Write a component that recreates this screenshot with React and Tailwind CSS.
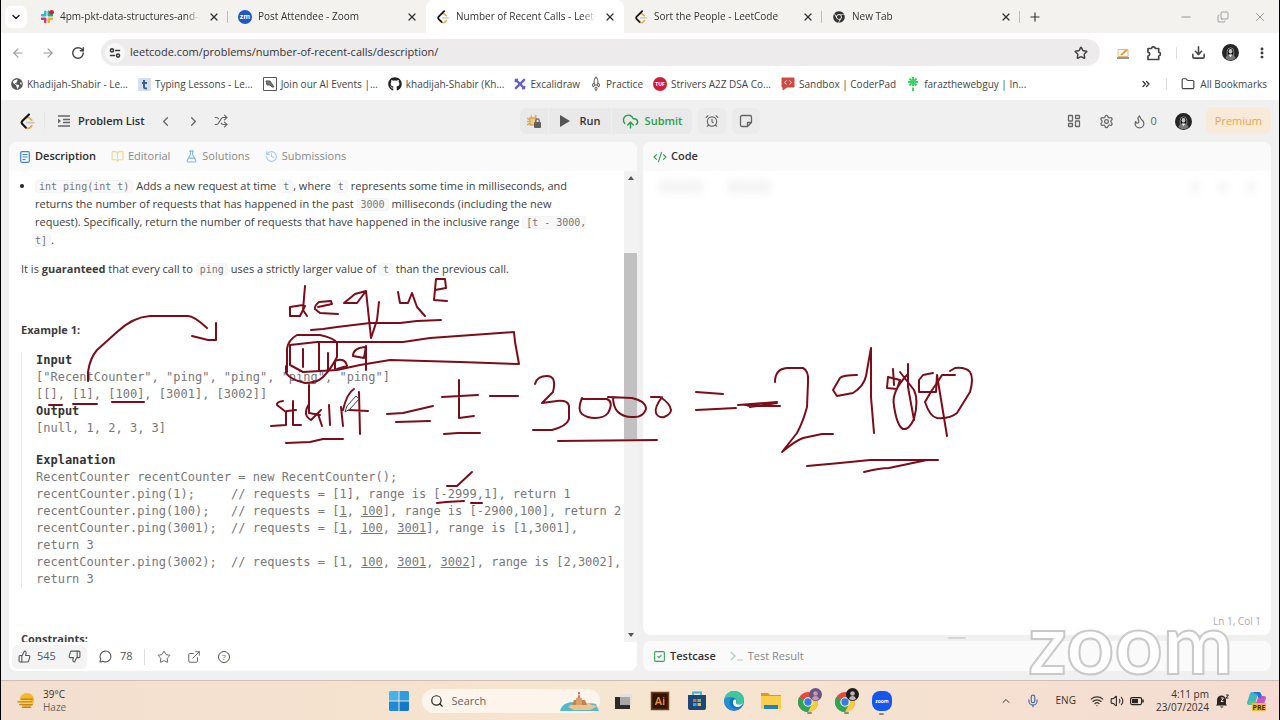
import React, { useState } from "react";
import {
  AlarmClock,
  ArrowLeft,
  ArrowRight,
  BookOpen,
  ChevronDown,
  ChevronLeft,
  ChevronRight,
  ChevronUp,
  ChevronsRight,
  CloudUpload,
  CodeXml,
  Copy,
  Download,
  EllipsisVertical,
  ExternalLink,
  Flame,
  Folder,
  FlaskConical,
  History,
  MessageCircle,
  Mic,
  Minus,
  Plus,
  Rocket,
  RotateCw,
  Search,
  Settings,
  Shuffle,
  SquareCheck,
  Star,
  ThumbsDown,
  ThumbsUp,
  Volume2,
  Wifi,
  X,
} from "lucide-react";
import { FaChrome, FaGithub, FaGlobeAmericas } from "react-icons/fa";

const LeetLogo = ({ className }) => (
  <svg viewBox="0 0 24 24" className={className} fill="none" strokeLinecap="round" strokeLinejoin="round">
    <path d="M9.500 20.500c1.800 1.800 4.500 1.600 6 0l2.500-2.500" stroke="#e0a850" strokeWidth="2.500" />
    <path d="m8.500 7.500c2-1.800 4.500-1.900 6.500 0l3 2.500" stroke="#e0a850" strokeWidth="2.500" />
    <path d="M11 13.500h10" stroke="#c9c5be" strokeWidth="2.500" />
    <path d="M14 2 5 11c-1.600 1.600-1.600 3.400 0 5l4.500 4.500" stroke="#161616" strokeWidth="3" />
  </svg>
);

const SlackLogo = () => (
  <svg viewBox="0 0 24 24" className="size-[14px] shrink-0" strokeLinecap="round" strokeWidth="4.200">
    <path d="M9 3v6M3.500 9H9" stroke="#36b5d8" />
    <path d="M15 3v6M15 9h5.500" stroke="#2fa67b" />
    <path d="M15 15v5.500M15 15h5.500" stroke="#e0b13f" />
    <path d="M9 15v5.500M3.500 15H9" stroke="#d33a66" />
    <circle cx="20" cy="4" r="4" fill="#c3262f" />
  </svg>
);

const ZoomBadge = () => (
  <svg viewBox="0 0 14 14" className="size-[14px] shrink-0">
    <circle cx="7" cy="7" r="7" fill="#1f55c8" />
    <text x="7" y="9" textAnchor="middle" fontSize="7" fontWeight="700" fill="#fff" fontFamily="Open Sans, sans-serif">
      zm
    </text>
  </svg>
);

const SiteInfoIcon = () => (
  <svg viewBox="0 0 14 14" className="size-3" fill="none" stroke="#3c3c3c" strokeWidth="1.800">
    <circle cx="3.500" cy="4" r="1.800" />
    <path d="M7 4h6M1 10h6" />
    <circle cx="10.500" cy="10" r="1.800" />
  </svg>
);

const PencilIcon = () => (
  <svg viewBox="0 0 14 14" className="size-[14px]" fill="none">
    <path d="M2 3.500h10v7H2z" stroke="#e8b877" />
    <path d="m4 9 6-6 1.500 1.500L6 9.500z" fill="#e59a3c" />
    <path d="M1 12h12" stroke="#67757c" strokeWidth="1.500" />
  </svg>
);

const PuzzleIcon = () => (
  <svg viewBox="0 0 16 16" className="size-4" fill="none" stroke="#444" strokeWidth="1.700" strokeLinejoin="round">
    <path d="M2 3.500h3.500c.2-2.200 3.600-2.200 3.800 0h3.400v3.700c2.300.2 2.300 3.600 0 3.800v3.500H2V11c2.300-.2 2.300-3.600 0-3.800z" />
  </svg>
);

const NoteIcon = () => (
  <svg viewBox="0 0 14 14" className="size-[14px]" fill="none" stroke="#666" strokeWidth="1.300" strokeLinejoin="round">
    <path d="M3 1.500h8q1.500 0 1.500 1.500v5.500l-4 4H3q-1.500 0-1.500-1.500V3q0-1.500 1.500-1.500zM12.500 8.500h-4v4" />
  </svg>
);

const Avatar = () => (
  <svg viewBox="0 0 18 18" className="size-[17px]">
    <circle cx="9" cy="9" r="9" fill="#252525" />
    <path d="M5.500 8a3.500 4 0 0 1 7 0v4h-7z" fill="#0b0b0b" stroke="#8f8f8f" />
    <ellipse cx="9" cy="7.800" rx="2" ry="2.400" fill="#c3c3c3" />
    <path d="M3.500 15c1-3 3-4 5.500-4s4.500 1 5.500 4a9 9 0 0 1-11 0z" fill="#777" />
    <path d="m7 11 2 3 2-3z" fill="#eee" />
  </svg>
);

const TypingIcon = () => (
  <svg viewBox="0 0 13 13" className="size-[13px]">
    <path d="M0 0h13v13H0z" fill="#d5dff0" />
    <path d="M6 2v7q0 1.500 3 1.500M4 5h5" stroke="#3a6298" strokeWidth="2" fill="none" />
  </svg>
);

const EventsIcon = () => (
  <svg viewBox="0 0 14 14" className="size-[14px]" fill="none" stroke="#555">
    <path d="M.5.500h13v13H.5z" />
    <path d="m3 4h4l4 6H9L7 8H4z" fill="#777" />
  </svg>
);

const ExcalidrawIcon = () => (
  <svg viewBox="0 0 13 13" className="size-3" stroke="#6560c5" strokeWidth="2.500" strokeLinecap="round">
    <path d="m2 2 9 9M11 2l-9 9" />
    <path d="M1.500 3.500 3.500 1.500M9.500 11.500l2-2" strokeWidth="2" />
  </svg>
);

const TufIcon = () => (
  <svg viewBox="0 0 14 14" className="size-[14px]">
    <circle cx="7" cy="7" r="7" fill="#cd2038" />
    <text x="7" y="9" textAnchor="middle" fontSize="5" fontWeight="700" fill="#fff" fontFamily="Open Sans, sans-serif">
      TUF
    </text>
  </svg>
);

const CoderPadIcon = () => (
  <svg viewBox="0 0 14 14" className="size-[14px]" fill="none">
    <path d="M1 1h12v9H6l-4 3v-3H1z" fill="#d2493f" stroke="#d2493f" strokeLinejoin="round" />
    <path d="M5.500 3.500 3.500 5.500l2 2M8.500 3.500l2 2-2 2" stroke="#fff" />
  </svg>
);

const LinktreeIcon = () => (
  <svg viewBox="0 0 14 14" className="size-[14px]" stroke="#3ed465" strokeWidth="2">
    <path d="M7 0v9M2 5h10M3.500 1.500 10.500 8.500M10.500 1.500 3.500 8.500M7 10.500V14" />
  </svg>
);

const ListIcon = () => (
  <svg viewBox="0 0 14 12" className="h-3 w-[14px]" stroke="#666" strokeWidth="1.300" fill="none">
    <path d="M1 1h12M6 4.500h7M6 7.500h7M1 11h12" />
    <path d="m1 3.500 3 2.500-3 2.500z" fill="#666" stroke="none" />
  </svg>
);

const LockedBugIcon = () => (
  <svg viewBox="0 0 14 14" className="size-[14px]" fill="none">
    <path d="M3 4h6v7H3zM0 4l3 2M0 11l3-2M0 7.500h3M4 1.500 5 4M9 1 8 4" stroke="#dfa857" strokeWidth="1.500" fill="#efc98c" />
    <rect x="7" y="8" width="7" height="6" rx="1" fill="#5f5f5f" />
    <path d="M8.800 8V6.500a1.700 1.700 0 0 1 3.400 0V8" stroke="#5f5f5f" strokeWidth="1.200" />
  </svg>
);

const GridIcon = () => (
  <svg viewBox="0 0 14 14" className="size-[14px]" fill="none" stroke="#666" strokeWidth="1.300">
    <rect x="1.500" y="1.500" width="4" height="5.500" rx=".6" />
    <rect x="8.500" y="1.500" width="4" height="3" rx=".6" />
    <rect x="1.500" y="9.500" width="4" height="3" rx=".6" />
    <rect x="8.500" y="7" width="4" height="5.500" rx=".6" />
  </svg>
);

const DocIcon = () => (
  <svg viewBox="0 0 10 12" className="h-3 w-[10px]" fill="none" stroke="#3a86dc" strokeWidth="1.200">
    <rect x=".7" y=".7" width="8.600" height="10.600" rx="1.200" />
    <path d="M2.500 3.500h5M2.500 6h5M2.500 8.500h3" />
  </svg>
);

const HelpIcon = () => (
  <svg viewBox="0 0 14 14" className="size-[14px]">
    <circle cx="7" cy="7" r="5.500" fill="none" stroke="#555" />
    <text x="7" y="10" textAnchor="middle" fontSize="8" fill="#555" fontFamily="Open Sans, sans-serif">
      ?
    </text>
  </svg>
);

const HazeIcon = () => (
  <svg viewBox="0 0 20 20" className="size-[18px]">
    <circle cx="11" cy="9" r="8" fill="#f5b829" />
    <path d="M5 8h12M1 11h15M3 14h14M6 17h9" stroke="#c98518" strokeWidth="1.600" strokeLinecap="round" />
    <path d="M3 9.500h12M5 12.500h12" stroke="#f8d67c" strokeWidth="1.200" />
  </svg>
);

const StartIcon = () => (
  <svg viewBox="0 0 20 20" className="size-5" fill="#1d8ad8">
    <path d="M0 1 1 0h8.500v9.500H0z" fill="#45b2ea" />
    <path d="M10.500 0H19l1 1v8.500h-9.500z" fill="#2d9de0" />
    <path d="M0 10.500h9.500V20H1l-1-1z" />
    <path d="M10.500 10.500H20V19l-1 1h-8.500z" fill="#1479c8" />
  </svg>
);

const SandcastleArt = () => (
  <svg viewBox="0 0 40 20" className="h-5 w-10">
    <path d="M0 20c2-8 10-10 18-8s12-1 18 1l3 7z" fill="#54b8ce" />
    <path d="M8 16c6-5 18-6 24-2l6 1-8 4H14z" fill="#eac58f" />
    <path d="m12 14 2-5h3l2-7 2 7h4l2 5z" fill="#c5814f" />
    <path d="M16 7h6v7h-6z" fill="#dc9d66" />
    <circle cx="19" cy="2" r="1" fill="#d2453a" />
  </svg>
);

const TaskViewIcon = () => (
  <svg viewBox="0 0 20 20" className="size-5">
    <path d="M7 3h12v11H7z" fill="#e3e0dd" />
    <path d="M2 6h5v8h10v4H2z" fill="#2c2b2b" />
    <path d="M7 6h10v8H7z" fill="#aaa6a3" />
  </svg>
);

const IllustratorIcon = () => (
  <svg viewBox="0 0 20 20" className="size-5">
    <rect x="1.500" y="1.500" width="17" height="17" fill="#301407" stroke="#704019" strokeWidth="1.500" />
    <text x="10" y="14" textAnchor="middle" fontSize="11" fontWeight="600" fill="#ef9334" fontFamily="Open Sans, sans-serif">
      Ai
    </text>
  </svg>
);

const StoreIcon = () => (
  <svg viewBox="0 0 20 20" className="size-5">
    <path d="M6 5V1.500h8V5" fill="none" stroke="#39b5d5" strokeWidth="1.800" />
    <path d="M1 4h18v13q0 2-2 2H3q-2 0-2-2z" fill="#1c4677" />
    <path d="M6 8h3.500v3H6z" fill="#e0623b" />
    <path d="M10.500 8H14v3h-3.500z" fill="#8dbb45" />
    <path d="M6 12h3.500v3H6z" fill="#3aa2dd" />
    <path d="M10.500 12H14v3h-3.500z" fill="#e8bb3c" />
  </svg>
);

const EdgeIcon = () => (
  <svg viewBox="0 0 20 20" className="size-5">
    <circle cx="10" cy="10" r="10" fill="#1673c4" />
    <path d="M.3 9C1 3 5.500 0 10 0c6 0 10 4 10 8.500 0 3-2.500 5-5.500 5-2 0-3-1-2.500-2 1.500-2.500-.5-5-4-5C4.500 6.500 1.500 7.500.3 9z" fill="#3fc6a0" />
    <path d="M.3 9C2 6 5 5.500 8 6.500 5 8 4.500 13 7.500 16c2 2 5 2.500 8 1.500A10 10 0 0 1 .3 9z" fill="#2193d5" />
    <path d="M12 11.500c-.5 1 .5 2 2.500 2 2 0 3.500-.5 4.800-2-1 3-3.500 5-6.300 4.500-3-.5-4.500-3-4-5.500.5-2 2-2.500 3-1.500z" fill="#eff8f8" />
  </svg>
);

const ExplorerIcon = () => (
  <svg viewBox="0 0 20 20" className="size-5">
    <path d="M0 2h7l2 2h11v5H0z" fill="#d99a22" />
    <path d="M0 5h20v13H0z" fill="#f8cf4c" />
    <path d="M3 14h14v4H3z" fill="#2280c4" />
  </svg>
);

const ChromeIcon = ({ badge, face }) => (
  <svg viewBox="0 0 24 24" className="size-6">
    <circle cx="10" cy="14" r="10" fill="#e6493b" />
    <path d="M10 14 1.300 9A10 10 0 0 0 10 24l4.500-8z" fill="#31a454" />
    <path d="M10 9.500h8.900A10 10 0 0 1 10 24l4-8z" fill="#f7cc3b" />
    <circle cx="10" cy="14" r="4.700" fill="#fff" />
    <circle cx="10" cy="14" r="3.700" fill="#377be0" />
    <circle cx="17.500" cy="6.500" r="6.500" fill={badge} />
    <path d="M14 11c.5-2 1.500-3 3.500-3s3 1 3.500 3c-2 1.500-5 1.500-7 0z" fill={face} />
    <circle cx="17.500" cy="5.500" r="2.300" fill={face} />
  </svg>
);

const ZoomAppIcon = () => (
  <svg viewBox="0 0 20 20" className="size-5">
    <rect width="20" height="20" rx="8" fill="#1456ee" />
    <text x="10" y="12" textAnchor="middle" fontSize="5" fontWeight="700" fill="#fff" fontFamily="Open Sans, sans-serif">
      zoom
    </text>
  </svg>
);

const BatteryIcon = () => (
  <svg viewBox="0 0 14 10" className="h-[10px] w-[14px]">
    <rect x=".6" y="1.600" width="11" height="7" rx="1.500" fill="none" stroke="#2b2522" strokeWidth="1.200" />
    <path d="M2 3h6v4.200H2z" fill="#2b2522" />
    <path d="M13 3.500v3" stroke="#2b2522" strokeWidth="1.500" />
  </svg>
);

const BellIcon = () => (
  <svg viewBox="0 0 14 14" className="size-[14px]">
    <path d="M2 10V6a4.500 4.500 0 0 1 9 0v4l1 1.500H1zM5 12.500h3.500a1.800 1.500 0 0 1-3.500 0z" fill="#2b2522" />
    <path d="M6 4h2.500L6 7.500h2.500" stroke="#f5e0d4" fill="none" />
    <path d="M11 1h2.500L11 4h2.500" stroke="#2b2522" fill="none" />
  </svg>
);

const CopilotIcon = () => (
  <svg viewBox="0 0 22 22" className="size-[22px]" fill="none" strokeLinejoin="round" strokeWidth="4">
    <path d="M9 4h5l2 5" stroke="#2c6fd6" />
    <path d="M9 4H7L4 13h4l3-9" stroke="#3fb6c4" />
    <path d="M16 8h3l-3 8h-4l3-8" stroke="#c557bd" />
    <path d="M4 13h5l1 4" stroke="#6ec06b" />
    <rect x="7" y="13" width="14" height="8" fill="#f3bb35" />
    <text x="14" y="20" textAnchor="middle" fontSize="7" fontWeight="700" fill="#432b0b" fontFamily="Open Sans, sans-serif">
      PRE
    </text>
  </svg>
);

const tabs = [
  { icon: <SlackLogo />, title: "4pm-pkt-data-structures-and-algo", sep: true },
  { icon: <ZoomBadge />, title: "Post Attendee - Zoom" },
  { icon: <LeetLogo className="size-[14px] shrink-0" />, title: "Number of Recent Calls - LeetCode", active: true },
  { icon: <LeetLogo className="size-[14px] shrink-0" />, title: "Sort the People - LeetCode", sep: true },
  { icon: <FaChrome className="mx-px size-3 shrink-0 text-[#333]" />, title: "New Tab", sep: true },
];

const bookmarks = [
  { icon: <FaGlobeAmericas className="size-3 text-[#555]" />, title: "Khadijah-Shabir - Le..." },
  { icon: <TypingIcon />, title: "Typing Lessons - Le..." },
  { icon: <EventsIcon />, title: "Join our AI Events |..." },
  { icon: <FaGithub className="size-[14px] text-[#222]" />, title: "khadijah-Shabir (Kh..." },
  { icon: <ExcalidrawIcon />, title: "Excalidraw" },
  { icon: <Rocket className="size-3 -rotate-45 text-[#666]" />, title: "Practice" },
  { icon: <TufIcon />, title: "Strivers A2Z DSA Co..." },
  { icon: <CoderPadIcon />, title: "Sandbox | CoderPad" },
  { icon: <LinktreeIcon />, title: "farazthewebguy | In..." },
];

// Pen strokes drawn over the shared screen
const strokes = [
  // curved arrow
  "M88 381V372Q90 358 97 350L117 332Q133 317 150 316H188Q194 316 207 328M216 323V340H208L192 336",
  "M49 405H62M73 404H97M112 402H144",
  // deque
  "M303 305 290 307V316H300L305 306M305 286 303 310 307 316",
  "M318 307 332 304 331 301 319 302Q314 306 315 309L320 313 338 314",
  "M366 291 355 294 344 303H357L366 291 371 338 377 320 379 302",
  "M398 292 400 303H408L412 293 417 307 425 316",
  "M435 290 446 288 445 279H436L434 300 447 301",
  "M311 330 323 329 337 327 370 323H400L417 321 441 320",
  // queue box
  "M290 345 317 342H403L430 338 500 333 514 332 515 342 519 364 460 362 390 360 360 365 337 370 303 372 290 365Z",
  "M287 372V349Q288 340 297 335H320Q334 338 337 343V357Q331 369 323 377 317 383 305 383 291 380 286 373V366",
  "M303 349V367M319 343V370M328 353V370M335 369V361Q345 357 347 366L337 369",
  "M365 347Q353 348 353 356L364 358 366 346V370M309 385V413L320 415",
  // start = t - 3000
  "M283 401Q276 402 277 405L286 412V425L271 426M293 401V425H301M287 411 296 410",
  "M309 404Q302 415 311 420L321 410M318 414 322 426M329 405 330 425M341 407 343 426M343 410Q347 393 354 389M359 392 360 434M349 410 368 411",
  "M286 443 310 442 323 439H343M387 414 403 413 433 406M396 422 430 421",
  "M459 380V418L474 416M442 397 478 395M444 434 458 433H480M490 396H518",
  "M535 384Q537 376 547 376T553 392L542 403 557 401Q568 400 569 406V419Q567 426 552 430H533",
  "M582 398Q577 410 582 414T595 418Q604 418 608 413 614 402 607 399H582",
  "M613 397Q613 407 618 412T632 417Q643 418 646 409 646 401 632 398L608 397",
  "M662 397Q654 408 656 413T664 417Q671 414 671 410 670 403 660 397H651",
  "M558 441 657 440M696 392 723 394M696 410 736 408",
  "M738 405 777 402M745 405 780 406M750 407 777 403M748 406H780",
  // -2900
  "M775 382Q775 369 787 368H803Q809 371 808 382L807 407Q803 422 797 433L782 452Q795 441 803 438L822 434H833",
  "M857 375Q843 375 840 378L833 390 837 396 853 393Q864 386 866 376L871 348V397L874 433",
  "M888 377 887 388 897 389 900 380ZM893 369 894 385M907 375Q891 392 894 406 897 426 903 429 909 430 914 419 919 400 914 390L900 372",
  "M908 364V387L914 420M933 373 923 375 919 380V392H936L937 375 947 436",
  "M955 375H942Q938 382 932 390L925 402Q930 417 937 418 950 419 957 413L970 392Q974 378 970 372 966 367 955 368L950 371",
  "M807 466 840 463 870 460H938M864 472Q880 468 889 468L927 460",
  // range underlines and tick
  "M447 486H457L472 472M437 503 446 502 464 501M471 503H482",
];

const Code = ({ children }) => (
  <code className="rounded-sm border border-[#f3f3f3] bg-[#f8f8f8] px-[3px] font-['DejaVu_Sans_Mono',monospace] text-[10px] leading-3 text-[#777]">
    {children}
  </code>
);

const BrowserTabs = () => (
  <header className="flex h-[33px] shrink-0 items-center bg-[#f3f2ef] pl-1">
    <button aria-label="Search tabs" className="mr-[3px] flex size-[22px] items-center justify-center rounded-md bg-white">
      <ChevronDown className="size-3 text-[#222]" strokeWidth={3} />
    </button>
    {tabs.map((tab) => (
      <div
        key={tab.title}
        className={`flex h-full w-[198px] min-w-0 items-center pl-[10px] pr-2 ${
          tab.active ? "rounded-t-lg bg-white" : ""
        }`}
      >
        {tab.icon}
        <span className="ml-[6px] mr-2 flex-1 overflow-hidden whitespace-nowrap mask-r-from-90% text-[10px] text-[#333]">
          {tab.title}
        </span>
        <button aria-label="Close tab">
          <X className="size-3 text-[#333]" strokeWidth={2.5} />
        </button>
        {tab.sep && <span className="-mr-2 ml-[7px] h-3 w-px bg-[#c5bcb6]" />}
      </div>
    ))}
    <button aria-label="New tab" className="ml-2">
      <Plus className="size-[14px] text-[#333]" />
    </button>
    <div className="ml-auto flex items-center gap-6 pr-3 text-[#888]">
      <Minus className="size-[14px]" strokeWidth={1.5} />
      <Copy className="size-3 -scale-x-100 rotate-180" strokeWidth={1.5} />
      <X className="size-[14px]" strokeWidth={1.5} />
    </div>
  </header>
);

const Toolbar = () => (
  <div className="flex h-[39px] shrink-0 items-center bg-white px-[10px]">
    <div className="flex items-center gap-4 text-[#999]">
      <ArrowLeft className="size-[14px]" />
      <ArrowRight className="size-[14px]" />
      <RotateCw className="size-[14px] text-[#444]" strokeWidth={2.5} />
    </div>
    <div className="ml-4 flex h-[27px] flex-1 items-center rounded-full bg-[#edebec] pl-1 pr-3">
      <span className="flex size-5 items-center justify-center rounded-full bg-[#f9f8f8]">
        <SiteInfoIcon />
      </span>
      <input
        aria-label="Address"
        className="ml-[5px] min-w-0 flex-1 bg-transparent text-[11px] text-[#333] outline-none"
        defaultValue="leetcode.com/problems/number-of-recent-calls/description/"
      />
      <Star className="size-[14px] text-[#444]" strokeWidth={2.5} />
    </div>
    <div className="ml-4 flex items-center gap-4">
      <PencilIcon />
      <PuzzleIcon />
      <span className="-mx-[2px] h-3 w-px bg-[#ddd]" />
      <Download className="size-[15px] text-[#444]" strokeWidth={2.5} />
      <Avatar />
      <EllipsisVertical className="size-[14px] text-[#333]" strokeWidth={3} />
    </div>
  </div>
);

const Bookmarks = () => (
  <nav className="flex h-7 shrink-0 items-center gap-[10px] bg-white pb-1 pl-[10px] pr-3 text-[10px] text-[#444]">
    {bookmarks.map((item) => (
      <a key={item.title} href="#bookmark" className="flex items-center gap-1 whitespace-nowrap">
        {item.icon}
        {item.title}
      </a>
    ))}
    <div className="ml-auto flex items-center gap-[14px]">
      <ChevronsRight className="size-3 text-[#333]" strokeWidth={2.5} />
      <span className="h-3 w-px bg-[#ddd]" />
      <a href="#all" className="flex items-center gap-[5px] whitespace-nowrap">
        <Folder className="size-[14px]" />
        All Bookmarks
      </a>
    </div>
  </nav>
);

const ProblemNav = () => (
  <div className="flex h-[42px] shrink-0 items-center px-2 text-[#666]">
    <div className="flex flex-1 items-center">
      <LeetLogo className="ml-[10px] size-[17px]" />
      <span className="mx-2 h-4 w-px bg-[#e6e6e6]" />
      <button className="ml-1 flex items-center gap-[7px] text-[11px] font-semibold text-[#2b2b2b]">
        <ListIcon />
        Problem List
      </button>
      <div className="ml-[13px] flex items-center gap-[13px]">
        <ChevronLeft className="size-[15px]" />
        <ChevronRight className="size-[15px]" />
        <Shuffle className="size-[14px]" />
      </div>
    </div>
    <div className="flex items-center gap-px text-[11px] font-semibold">
      <button aria-label="Debugger" className="flex h-[26px] w-7 items-center justify-center rounded-l-md bg-[#e9e9e9]">
        <LockedBugIcon />
      </button>
      <button className="flex h-[26px] items-center gap-[10px] bg-[#e9e9e9] px-[10px] text-[#333]">
        <svg viewBox="0 0 11 12" className="h-3 w-[11px]" fill="#555">
          <path d="M1 0 11 6 1 12z" />
        </svg>
        Run
      </button>
      <button className="flex h-[26px] items-center gap-[6px] rounded-r-md bg-[#e9e9e9] px-[10px] text-[#2a9d4a]">
        <CloudUpload className="size-[17px]" />
        Submit
      </button>
      <button aria-label="Timer" className="ml-1 flex h-[26px] w-[30px] items-center justify-center rounded-md bg-[#ebebeb]">
        <AlarmClock className="size-[14px]" />
      </button>
      <button aria-label="Notes" className="ml-1 flex h-[26px] w-[28px] items-center justify-center rounded-md bg-[#ebebeb]">
        <NoteIcon />
      </button>
    </div>
    <div className="flex flex-1 items-center justify-end gap-[18px] text-[11px]">
      <GridIcon />
      <Settings className="size-[15px]" />
      <span className="flex items-center gap-1">
        <Flame className="size-[15px]" />0
      </span>
      <Avatar />
      <button className="-ml-1 h-[26px] rounded-md bg-[#f8ead8] px-[9px] text-[#efa149]">Premium</button>
    </div>
  </div>
);

// One line of the example block
const Line = ({ children }) => <div className="whitespace-pre">{children}</div>;

const Description = () => (
  <div className="flex-1 overflow-hidden whitespace-nowrap pl-3 pt-[6px] text-[11px] leading-[18px] text-[#3d3d3d]">
    <ul className="list-disc pl-[14px] marker:text-[#222]">
      <li>
        <Code>int ping(int t)</Code> Adds a new request at time <Code>t</Code>, where <Code>t</Code> represents some
        time in milliseconds, and
        <br />
        returns the number of requests that has happened in the past <Code>3000</Code> milliseconds (including the new
        <br />
        request). Specifically, return the number of requests that have happened in the inclusive range{" "}
        <Code>
          [t - 3000,
          <br />
          t]
        </Code>
        .
      </li>
    </ul>
    <p className="mt-[11px]">
      It is <b>guaranteed</b> that every call to <Code>ping</Code> uses a strictly larger value of <Code>t</Code> than
      the previous call.
    </p>
    <p className="mt-[43px] font-bold">Example 1:</p>
    <div className="mt-[13px] border-l border-[#e8e8e8] pl-[14px] font-['DejaVu_Sans_Mono',monospace] text-xs leading-[17px] text-[#777]">
      <div>
        <p className="font-bold text-[#333]">Input</p>
        <Line>["RecentCounter", "ping", "ping", "ping", "ping"]</Line>
        <Line>[[], [1], [100], [3001], [3002]]</Line>
        <p className="font-bold text-[#333]">Output</p>
        <Line>[null, 1, 2, 3, 3]</Line>
      </div>
      <div className="mt-[15px]">
        <p className="font-bold text-[#333]">Explanation</p>
        <Line>RecentCounter recentCounter = new RecentCounter();</Line>
        <Line>{"recentCounter.ping(1);     // requests = [1], range is [-2999,1], return 1"}</Line>
        <Line>
          {"recentCounter.ping(100);   // requests = ["}
          <u>1</u>, <u>100</u>], range is [-2900,100], return 2
        </Line>
        <Line>
          {"recentCounter.ping(3001);  // requests = ["}
          <u>1</u>, <u>100</u>, <u>3001</u>], range is [1,3001],
        </Line>
        <Line>return 3</Line>
        <Line>
          {"recentCounter.ping(3002);  // requests = [1, "}
          <u>100</u>, <u>3001</u>, <u>3002</u>], range is [2,3002],
        </Line>
        <Line>return 3</Line>
      </div>
    </div>
    <p className="mt-[42px] font-bold">Constraints:</p>
  </div>
);

const LeftPanel = () => (
  <section className="flex min-w-0 flex-1 flex-col overflow-hidden rounded-lg bg-white">
    <div className="flex h-[29px] shrink-0 items-center gap-[15px] bg-[#fafafa] pl-[11px] text-[11px] text-[#888]">
      <a href="#description" className="flex items-center gap-[5px] font-semibold text-[#2b2b2b]">
        <DocIcon />
        Description
      </a>
      <a href="#editorial" className="flex items-center gap-1">
        <BookOpen className="size-[13px] text-[#f1d58c]" />
        Editorial
      </a>
      <a href="#solutions" className="flex items-center gap-1">
        <FlaskConical className="size-[13px] text-[#7db4ec]" />
        Solutions
      </a>
      <a href="#submissions" className="flex items-center gap-1">
        <History className="size-[13px] text-[#a8c8ea]" />
        Submissions
      </a>
    </div>
    <div className="flex min-h-0 flex-1">
      <Description />
      <div className="flex w-[13px] shrink-0 flex-col items-center bg-[#f2f2f2] py-[5px]">
        <span className="border-x-[3px] border-b-4 border-x-transparent border-b-[#555]" />
        <span className="mt-[73px] h-[186px] w-full bg-[#c1c1c1]" />
        <span className="mt-auto border-x-[3px] border-t-4 border-x-transparent border-t-[#555]" />
      </div>
    </div>
    <div className="flex h-[29px] shrink-0 items-center gap-4 pl-[3px] text-[11px] text-[#555]">
      <div className="flex h-6 items-center gap-[6px] rounded-md bg-[#f4f4f4] px-[6px]">
        <button className="flex items-center gap-[6px]">
          <ThumbsUp className="size-[13px]" />
          545
        </button>
        <button aria-label="Dislike" className="ml-[6px]">
          <ThumbsDown className="size-[13px]" />
        </button>
      </div>
      <button className="-ml-1 flex items-center gap-2">
        <MessageCircle className="size-[13px]" />
        78
      </button>
      <span className="-ml-1 h-4 w-px bg-[#ddd]" />
      <Star className="-ml-1 size-[14px]" strokeWidth={1.5} />
      <ExternalLink className="size-[14px]" strokeWidth={1.5} />
      <HelpIcon />
    </div>
  </section>
);

const RightPanel = () => (
  <section className="flex min-w-0 flex-1 flex-col">
    <div className="flex flex-1 flex-col overflow-hidden rounded-lg bg-white">
      <div className="flex h-[29px] items-center gap-1 bg-[#fafafa] pl-[10px] text-[11px] font-semibold text-[#333]">
        <CodeXml className="size-[14px] text-[#2fa551]" />
        Code
      </div>
      <div className="flex h-8 items-center gap-6 px-4">
        <span className="h-3 w-11 bg-[#f3f3f3] blur-xs" />
        <span className="h-3 w-11 bg-[#f3f3f3] blur-xs" />
        <span className="ml-auto size-2 bg-[#efefef] blur-xs" />
        <span className="-ml-1 size-2 bg-[#efefef] blur-xs" />
        <span className="-ml-1 size-2 bg-[#efefef] blur-xs" />
      </div>
      <p className="mt-auto pb-[6px] pr-[10px] text-right text-[10px] text-[#aaa]">Ln 1, Col 1</p>
    </div>
    <div className="flex h-[6px] items-center justify-center">
      <span className="h-[2px] w-[18px] rounded bg-[#d5d5d5]" />
    </div>
    <div className="flex h-[30px] items-center gap-[14px] rounded-lg bg-[#fafafa] pl-[10px] text-[11px]">
      <button className="flex items-center gap-1 font-semibold text-[#333]">
        <SquareCheck className="size-[13px] text-[#2fa551]" />
        Testcase
      </button>
      <button className="flex items-center gap-1 text-[#888]">
        <svg viewBox="0 0 14 12" className="h-3 w-[14px]" fill="none" stroke="#a9cdb3" strokeWidth="1.200">
          <path d="m1 2 4 4-4 4M7 10h6" />
        </svg>
        Test Result
      </button>
    </div>
  </section>
);

const Taskbar = () => (
  <footer className="flex h-10 shrink-0 items-center border-t border-[#cdbfb7] bg-linear-to-r from-[#f3dfcf] via-[#f6e5cf] to-[#f4dcd2] px-4 text-[10px] leading-[13px] text-[#3a322e]">
    <div className="flex flex-1 items-center gap-2">
      <HazeIcon />
      <div>
        <p>39°C</p>
        <p className="text-[#6c625c]">Haze</p>
      </div>
    </div>
    <div className="flex items-center gap-[17px]">
      <StartIcon />
      <label className="-mx-1 flex h-6 w-[178px] items-center rounded-full bg-[#fdf5ec] pl-2">
        <Search className="size-[14px] text-[#222]" />
        <input
          aria-label="Search"
          placeholder="Search"
          className="ml-2 min-w-0 flex-1 bg-transparent text-[11px] outline-none placeholder:text-[#666]"
        />
        <SandcastleArt />
      </label>
      <TaskViewIcon />
      <IllustratorIcon />
      <StoreIcon />
      <EdgeIcon />
      <ExplorerIcon />
      <span className="-mr-1 flex flex-col items-center">
        <ChromeIcon badge="#69538a" face="#c39bb0" />
        <span className="h-[2px] w-[5px] rounded bg-[#888]" />
      </span>
      <span className="-mr-1 flex flex-col items-center">
        <ChromeIcon badge="#1f1b1b" face="#b9b5b5" />
        <span className="h-[2px] w-[5px] rounded bg-[#888]" />
      </span>
      <span className="flex flex-col items-center gap-[2px] pt-1">
        <ZoomAppIcon />
        <span className="h-[2px] w-[5px] rounded bg-[#888]" />
      </span>
    </div>
    <div className="flex flex-1 items-center justify-end">
      <ChevronUp className="size-3" />
      <Mic className="ml-[14px] size-[14px] text-[#5069a8]" />
      <span className="ml-4">ENG</span>
      <Wifi className="ml-[14px] size-[14px]" />
      <Volume2 className="ml-[6px] size-[14px]" />
      <span className="ml-[6px]">
        <BatteryIcon />
      </span>
      <div className="ml-3 text-right">
        <p>4:11 pm</p>
        <p>23/07/2024</p>
      </div>
      <span className="ml-[6px]">
        <BellIcon />
      </span>
      <span className="-mr-1 ml-4">
        <CopilotIcon />
      </span>
    </div>
  </footer>
);

const Annotations = () => (
  <svg viewBox="0 0 1280 720" className="pointer-events-none absolute -left-px top-0 w-screen max-w-none" fill="none">
    <g stroke="#7b0d1a" strokeWidth="2" strokeLinecap="round" strokeLinejoin="round">
      {strokes.map((d) => (
        <path key={d} d={d} />
      ))}
    </g>
    <path d="m345 412 2-6 9-10 3 3-9 10z" fill="#fff" stroke="#444" strokeWidth="1" />
  </svg>
);

export default function App() {
  const [watermark] = useState("zoom");

  return (
    <div className="relative flex h-screen flex-col overflow-hidden border-x border-black bg-[#f0f0f0] font-['Open_Sans',sans-serif]">
      <BrowserTabs />
      <Toolbar />
      <Bookmarks />
      <ProblemNav />
      <main className="flex min-h-0 flex-1 gap-[6px] px-2 pb-[9px]">
        <LeftPanel />
        <RightPanel />
      </main>
      <Taskbar />
      <Annotations />
      <div className="pointer-events-none absolute bottom-[54px] right-[46px] font-['Lato',sans-serif] text-[84px] leading-[48px] font-bold text-white [-webkit-text-stroke:2px_#c9c9c9]">
        {watermark}
      </div>
    </div>
  );
}
